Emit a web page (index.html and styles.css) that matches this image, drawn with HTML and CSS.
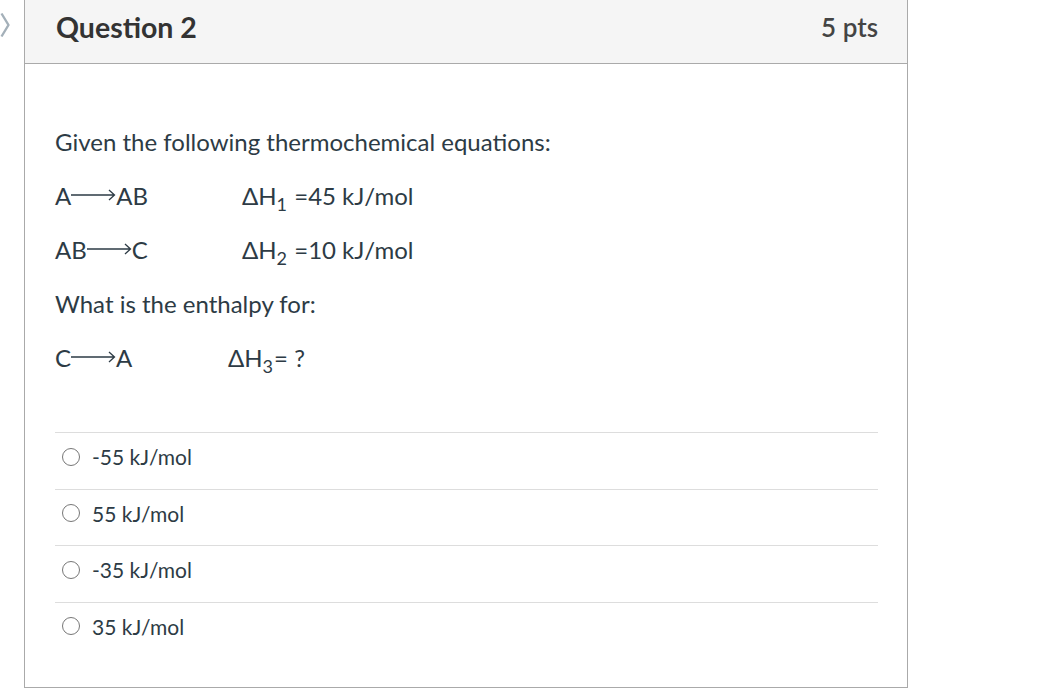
FILE: index.html
```html
<!DOCTYPE html>
<html>
<head>
<meta charset="utf-8">
<link rel="stylesheet" href="styles.css">
</head>
<body>
<div class="page">
  <div class="rail">
    <svg class="chev" width="11" height="26" viewBox="0 0 11 26"><path d="M1.5 1.5 L8.5 13 L1.5 24.5" fill="none" stroke="#a4b0b9" stroke-width="2.4" stroke-linejoin="round"/></svg>
  </div>
  <div class="card">
    <div class="header">
      <div class="title">Question 2</div>
      <div class="pts">5 pts</div>
    </div>
    <div class="body">
      <div class="qtext">
        <div class="line"><span>Given the following thermochemical equations:</span></div>
        <div class="line"><span class="eq">A<svg class="arr" width="47" height="14" viewBox="0 0 47 14"><path d="M1 7 H44 M39 2 L44.5 7 L39 12" fill="none" stroke="#2d3b45" stroke-width="1.3"/></svg>AB</span><span>ΔH<sub>1</sub> =45 kJ/mol</span></div>
        <div class="line"><span class="eq">AB<svg class="arr" width="47" height="14" viewBox="0 0 47 14"><path d="M1 7 H44 M39 2 L44.5 7 L39 12" fill="none" stroke="#2d3b45" stroke-width="1.3"/></svg>C</span><span>ΔH<sub>2</sub> =10 kJ/mol</span></div>
        <div class="line"><span>What is the enthalpy for:</span></div>
        <div class="line"><span class="eq short">C<svg class="arr" width="47" height="14" viewBox="0 0 47 14"><path d="M1 7 H44 M39 2 L44.5 7 L39 12" fill="none" stroke="#2d3b45" stroke-width="1.3"/></svg>A</span><span>ΔH<sub>3</sub>= ?</span></div>
      </div>
      <div class="answers">
        <label class="answer"><span class="radio"></span><span class="atext">-55 kJ/mol</span></label>
        <label class="answer"><span class="radio"></span><span class="atext">55 kJ/mol</span></label>
        <label class="answer"><span class="radio"></span><span class="atext">-35 kJ/mol</span></label>
        <label class="answer"><span class="radio"></span><span class="atext">35 kJ/mol</span></label>
      </div>
    </div>
  </div>
</div>
</body>
</html>
```
FILE: styles.css
```css
html, body {
  margin: 0;
  padding: 0;
  background: #fff;
}
body {
  font-family: Lato, "Liberation Sans", sans-serif;
  color: #2d3b45;
  width: 1039px;
  height: 688px;
  overflow: hidden;
}
.page {
  display: flex;
  align-items: flex-start;
}
.rail {
  width: 24px;
  padding-top: 12px;
}
.chev {
  display: block;
}
.card {
  width: 884px;
  border-left: 1px solid #aaa;
  border-right: 1px solid #aaa;
  border-bottom: 1px solid #aaa;
  height: 688px;
  box-sizing: border-box;
}
.header {
  height: 63px;
  background: #f5f5f5;
  border-bottom: 1px solid #aaa;
  display: flex;
  align-items: center;
  justify-content: space-between;
  padding: 0 29px 0 31px;
}
.title {
  font-size: 28.5px;
  font-weight: bold;
  color: #333;
  margin-top: -10px;
}
.pts {
  font-size: 26px;
  font-weight: 600;
  color: #444;
  margin-top: -9px;
}
.body {
  padding: 51px 29px 0 30px;
}
.line {
  height: 54px;
  line-height: 54px;
  font-size: 24px;
  white-space: nowrap;
}
.eq {
  display: inline-block;
  width: 187px;
}
.eq.short {
  width: 173px;
}
.arr {
  vertical-align: 3px;
  margin: 0 -1px;
}
sub {
  font-size: 18px;
  vertical-align: -6px;
  line-height: 0;
  margin-right: 1px;
}
.answers {
  margin-top: 47px;
}
.answer {
  display: flex;
  align-items: center;
  height: 56.5px;
  border-top: 1px solid #ddd;
  padding-left: 7px;
  box-sizing: border-box;
  padding-bottom: 8px;
}
.radio {
  width: 16px;
  height: 16px;
  border: 1.6px solid #777;
  border-radius: 50%;
  margin-right: 12px;
}
.atext {
  font-size: 21px;
}
```
